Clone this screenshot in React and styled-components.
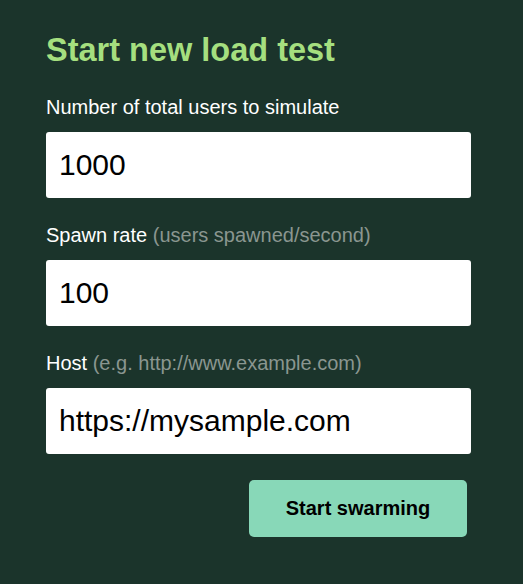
import styled, { createGlobalStyle } from 'styled-components';

const GlobalStyle = createGlobalStyle`
   html, body {
      margin: 0;
      padding: 0;
      background: #1b342b;
   }
   body {
      font-family: "Liberation Sans", Arial, sans-serif;
   }
`;

const fields = [
   { label: 'Number of total users to simulate', value: '1000' },
   { label: 'Spawn rate', hint: '(users spawned/second)', value: '100' },
   { label: 'Host', hint: '(e.g. http://www.example.com)', value: 'https://mysample.com' },
];

export default function App() {
   return (
      <>
         <GlobalStyle />
         <Wrapper>
            <Title>Start new load test</Title>
            <StyledForm onSubmit={(e) => e.preventDefault()}>
               {fields.map((field) => (
                  <Field key={field.label}>
                     <Label>
                        {field.label}
                        {field.hint && <Hint> {field.hint}</Hint>}
                     </Label>
                     <Input type="text" defaultValue={field.value} />
                  </Field>
               ))}
               <Actions>
                  <SubmitButton type="submit">Start swarming</SubmitButton>
               </Actions>
            </StyledForm>
         </Wrapper>
      </>
   );
}

const Wrapper = styled.div`
   width: 425px;
   padding: 32px 0 0 46px;
`;

const Title = styled.h2`
   margin: 0;
   font-size: 32.5px;
   line-height: 36px;
   font-weight: 700;
   color: #a5df7f;
`;

const StyledForm = styled.form`
   display: flex;
   flex-direction: column;
   gap: 25px;
   margin-top: 27px;
`;

const Field = styled.div`
   display: flex;
   flex-direction: column;
   gap: 13px;
`;

const Label = styled.label`
   font-size: 20px;
   line-height: 24px;
   color: #ffffff;
`;

const Hint = styled.span`
   color: #8a9690;
`;

const Input = styled.input`
   box-sizing: border-box;
   width: 425px;
   height: 66px;
   padding: 0 13px;
   border: none;
   border-radius: 3px;
   background: #ffffff;
   color: #000000;
   font-family: "Liberation Sans", Arial, sans-serif;
   font-size: 30px;
   outline: none;
`;

const Actions = styled.div`
   display: flex;
   justify-content: flex-end;
   margin-top: 1px;
   padding-right: 4px;
`;

const SubmitButton = styled.button`
   width: 218px;
   height: 57px;
   border: none;
   border-radius: 5px;
   background: #88d8b8;
   color: #000000;
   font-family: "Liberation Sans", Arial, sans-serif;
   font-size: 20px;
   font-weight: 700;
   cursor: pointer;
`;
